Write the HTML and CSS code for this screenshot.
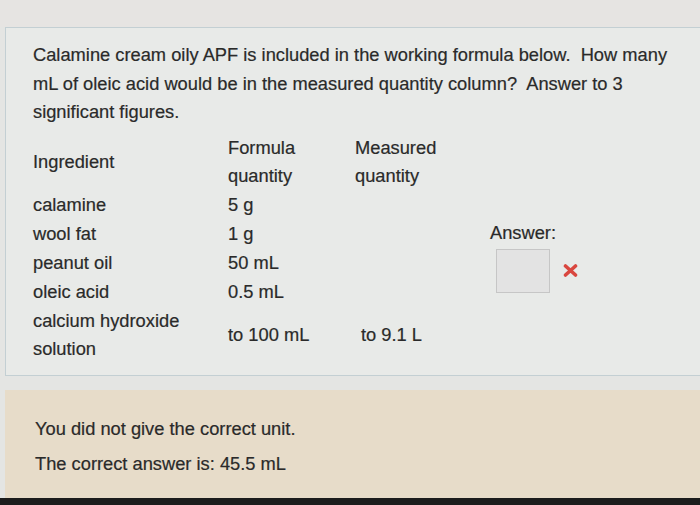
FILE: index.html
```html
<!DOCTYPE html>
<html>
<head>
<meta charset="utf-8">
<link rel="stylesheet" href="styles.css">
</head>
<body>
<div class="page">
  <div class="topstrip"></div>
  <div class="card">
    <p class="question">Calamine cream oily APF is included in the working formula below.&nbsp; How many mL of oleic acid would be in the measured quantity column?&nbsp; Answer to 3 significant figures.</p>
    <div class="body">
      <div class="table">
        <div class="cell mid">Ingredient</div>
        <div class="cell">Formula<br>quantity</div>
        <div class="cell">Measured<br>quantity</div>
        <div class="cell">calamine</div>
        <div class="cell">5 g</div>
        <div class="cell"></div>
        <div class="cell">wool fat</div>
        <div class="cell">1 g</div>
        <div class="cell"></div>
        <div class="cell">peanut oil</div>
        <div class="cell">50 mL</div>
        <div class="cell"></div>
        <div class="cell">oleic acid</div>
        <div class="cell">0.5 mL</div>
        <div class="cell"></div>
        <div class="cell">calcium hydroxide<br>solution</div>
        <div class="cell mid">to 100 mL</div>
        <div class="cell mid shift">to 9.1 L</div>
      </div>
      <div class="answer">
        <div class="label">Answer:</div>
        <div class="inputrow">
          <div class="input"></div>
          <svg class="cross" width="15" height="13" viewBox="0 0 15 13"><path d="M2.5 2 L12.5 11 M12.5 2 L2.5 11" stroke="#d9473f" stroke-width="3.6" stroke-linecap="round"/></svg>
        </div>
      </div>
    </div>
  </div>
  <div class="feedback">
    <p>You did not give the correct unit.</p>
    <p>The correct answer is: 45.5 mL</p>
  </div>
  <div class="bottomstrip"></div>
</div>
</body>
</html>
```

FILE: styles.css
```css
html, body {
  margin: 0;
  padding: 0;
  background: #e4e5e3;
}
.page {
  width: 700px;
  height: 505px;
  overflow: hidden;
  display: flex;
  flex-direction: column;
  font-family: "Liberation Sans", Arial, sans-serif;
  font-size: 18.3px;
  color: #2a2a2a;
  -webkit-text-stroke: 0.2px #2a2a2a;
}
.topstrip {
  height: 27px;
  background: #e6e4e2;
  flex: none;
}
.card {
  flex: none;
  margin-left: 5px;
  width: 710px;
  height: 349px;
  box-sizing: border-box;
  border: 1px solid #c3cfd3;
  background: #e8eae8;
  padding: 13px 0 0 27px;
}
.question {
  margin: 0;
  width: 645px;
  line-height: 28.5px;
}
.body {
  display: flex;
  margin-top: 7px;
}
.table {
  display: grid;
  grid-template-columns: 195px 127px 135px;
  grid-template-rows: 57px 29px 29px 29px 29px 56px;
  line-height: 28px;
}
.mid {
  align-self: center;
}
.shift {
  padding-left: 6px;
}
.answer {
  margin-top: 85px;
}
.label {
  line-height: 28px;
}
.inputrow {
  display: flex;
  align-items: center;
  margin-top: 2px;
  margin-left: 6px;
}
.input {
  width: 52px;
  height: 42px;
  border: 1px solid #c6c6c6;
  background: #e3e3e3;
}
.cross {
  margin-left: 13px;
}
.feedback {
  flex: none;
  margin-top: 14px;
  margin-left: 5px;
  height: 108px;
  box-sizing: border-box;
  background: #e7dcc9;
  padding: 21px 0 0 30px;
}
.feedback p {
  margin: 0;
  line-height: 35px;
}
.bottomstrip {
  flex: 1;
  background: #1c1c1c;
}
```
